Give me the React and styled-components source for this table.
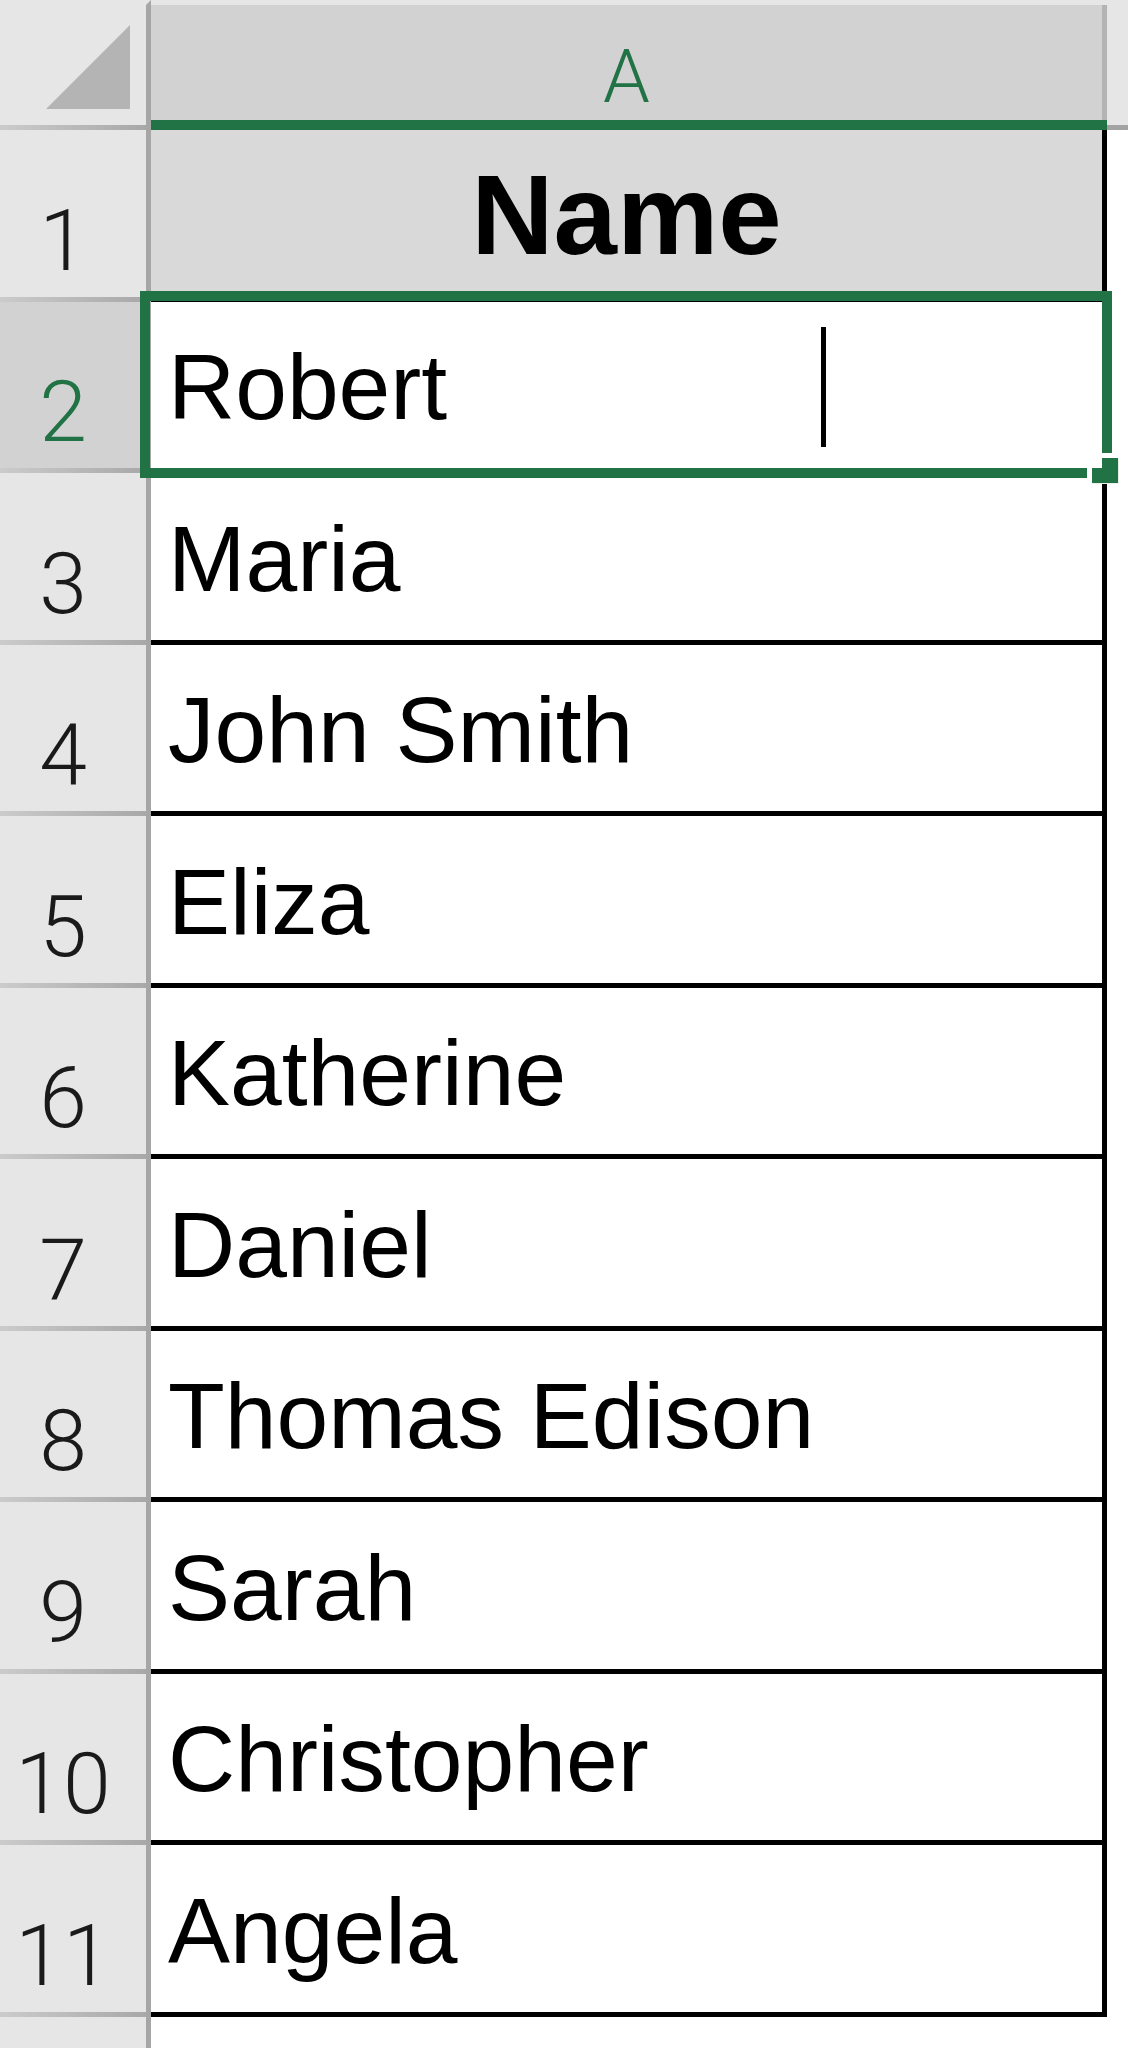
import styled, { createGlobalStyle } from 'styled-components'

const names = [
  'Robert',
  'Maria',
  'John Smith',
  'Eliza',
  'Katherine',
  'Daniel',
  'Thomas Edison',
  'Sarah',
  'Christopher',
  'Angela',
]

const GREEN = '#217346'
const ROW_LINE = 'linear-gradient(to right, #cbcbcb, #a8a8a8)'

const GlobalStyle = createGlobalStyle`
  html, body {
    margin: 0;
    background: #fff;
  }
  body {
    font-family: 'Liberation Sans', Arial, sans-serif;
  }
  * {
    box-sizing: border-box;
  }
`

const Sheet = styled.div`
  display: grid;
  grid-template-columns: 151px 956px 1fr;
  grid-template-rows: 130px;
  grid-auto-rows: 171.5px;
  width: 1128px;
  height: 2048px;
  overflow: hidden;
`

const Corner = styled.div`
  display: flex;
  justify-content: flex-end;
  align-items: flex-end;
  padding: 0 16px 21px 0;
  border-top: 5px solid #e6e6e6;
  border-right: 5px solid #a6a6a6;
  background: ${ROW_LINE} bottom / 100% 5px no-repeat, #e6e6e6;
  svg {
    display: block;
  }
`

const ColumnHeader = styled.div`
  display: flex;
  justify-content: center;
  align-items: flex-end;
  padding: 0 5px 6px 0;
  border-top: 5px solid #e6e6e6;
  border-bottom: 10px solid ${GREEN};
  background: #d2d2d2;
  box-shadow: inset -5px 0 0 #b4b4b4;
  color: ${GREEN};
  font-family: Roboto, 'Liberation Sans', sans-serif;
  font-weight: 300;
  font-size: 75px;
  line-height: 1;
`

const HeaderFiller = styled.div`
  border-top: 5px solid #e6e6e6;
  border-bottom: 5px solid #a3a3a3;
  background: #e6e6e6;
`

const RowHeader = styled.div`
  display: flex;
  justify-content: center;
  align-items: flex-end;
  padding: 0 20px 18px 0;
  border-right: 5px solid #a6a6a6;
  background: ${ROW_LINE} bottom / 100% 5px no-repeat,
    ${(p) => (p.$active ? '#d2d2d2' : '#e6e6e6')};
  color: ${(p) => (p.$active ? GREEN : '#1a1a1a')};
  font-family: Roboto, 'Liberation Sans', sans-serif;
  font-weight: 300;
  font-size: 86px;
  line-height: 1;
`

const Cell = styled.div`
  position: relative;
  display: flex;
  align-items: flex-end;
  justify-content: ${(p) => (p.$title ? 'center' : 'flex-start')};
  padding: ${(p) => (p.$title ? '0 0 25px 0' : '0 0 34px 17px')};
  border-right: 5px solid #000;
  border-bottom: 5px solid #000;
  background: ${(p) => (p.$title ? '#d9d9d9' : '#fff')};
  color: #000;
  font-size: ${(p) => (p.$title ? '114px' : '93px')};
  font-weight: ${(p) => (p.$title ? 700 : 400)};
  line-height: 1;
  white-space: nowrap;
`

const EmptyCell = styled.div`
  background: #fff;
`

const SelectionFrame = styled.div`
  position: absolute;
  left: -11px;
  top: -10.5px;
  right: -10px;
  bottom: -10px;
  border: 10px solid ${GREEN};
  pointer-events: none;
  z-index: 2;
`

const FillHandle = styled.div`
  position: absolute;
  left: 941px;
  top: 156.5px;
  width: 26px;
  height: 25px;
  background: ${GREEN};
  box-shadow: -5px -5px 0 0 #fff, 1px 1px 0 0 #e8efe9;
  z-index: 3;
  &::before {
    content: '';
    position: absolute;
    left: 0;
    top: 0;
    width: 10px;
    height: 10px;
    background: #fff;
  }
`

const Caret = styled.span`
  position: absolute;
  left: 670px;
  top: 25.5px;
  width: 5px;
  height: 120px;
  background: #000;
  z-index: 3;
`

const RestHeader = styled.div`
  border-right: 5px solid #a6a6a6;
  background: #e6e6e6;
`

export default function App() {
  return (
    <>
      <GlobalStyle />
      <Sheet>
        <Corner>
          <svg width="84" height="84" viewBox="0 0 84 84">
            <polygon points="84,0 84,84 0,84" fill="#b4b4b4" />
          </svg>
        </Corner>
        <ColumnHeader>A</ColumnHeader>
        <HeaderFiller />

        <RowHeader>1</RowHeader>
        <Cell $title>Name</Cell>
        <EmptyCell />

        {names.map((name, i) => {
          const selected = i === 0
          return [
            <RowHeader key={'h' + i} $active={selected}>
              {i + 2}
            </RowHeader>,
            <Cell key={'c' + i}>
              {name}
              {selected && (
                <>
                  <SelectionFrame />
                  <FillHandle />
                  <Caret />
                </>
              )}
            </Cell>,
            <EmptyCell key={'e' + i} />,
          ]
        })}

        <RestHeader />
        <EmptyCell />
        <EmptyCell />
      </Sheet>
    </>
  )
}
